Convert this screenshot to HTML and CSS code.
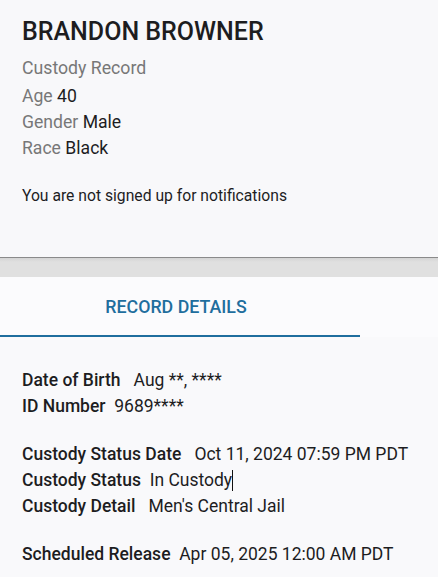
FILE: index.html
```html
<!DOCTYPE html>
<html>
<head>
<meta charset="utf-8">
<link rel="stylesheet" href="styles.css">
</head>
<body>
<div class="header">
  <h1 class="name">BRANDON BROWNER</h1>
  <div class="sub">Custody Record</div>
  <div class="meta first"><span class="lbl">Age</span> <span class="val">40</span></div>
  <div class="meta"><span class="lbl">Gender</span> <span class="val">Male</span></div>
  <div class="meta"><span class="lbl">Race</span> <span class="val">Black</span></div>
  <div class="notice">You are not signed up for notifications</div>
</div>
<div class="band"></div>
<div class="tabs">
  <div class="tab active">RECORD DETAILS</div>
</div>
<div class="details">
  <div class="group">
    <div class="row"><span class="k">Date of Birth</span>   <span class="v">Aug **, ****</span></div>
    <div class="row"><span class="k">ID Number</span>  <span class="v">9689****</span></div>
  </div>
  <div class="group">
    <div class="row"><span class="k">Custody Status Date</span>   <span class="v">Oct 11, 2024 07:59 PM PDT</span></div>
    <div class="row"><span class="k">Custody Status</span>  <span class="v">In Custody<span class="caret"></span></span></div>
    <div class="row"><span class="k">Custody Detail</span>   <span class="v">Men's Central Jail</span></div>
  </div>
  <div class="group">
    <div class="row"><span class="k">Scheduled Release</span>  <span class="v">Apr 05, 2025 12:00 AM PDT</span></div>
  </div>
</div>
</body>
</html>
```
FILE: styles.css
```css
html, body {
  margin: 0;
  padding: 0;
}
body {
  font-family: Roboto, "Liberation Sans", sans-serif;
  background: #f9f9fb;
  color: #1d1d1f;
  width: 438px;
  height: 577px;
  overflow: hidden;
}
.header {
  background: #f8f8fa;
  padding: 16px 22px 0;
  height: 241px;
  border-bottom: 1px solid #8a8a8a;
}
.name {
  margin: 0;
  font-size: 25px;
  font-weight: 500;
  line-height: 32px;
  color: #1d1d1f;
}
.sub {
  margin-top: 8px;
  font-size: 17.7px;
  line-height: 25px;
  color: #777;
}
.meta {
  font-size: 17.6px;
  line-height: 26px;
}
.meta.first {
  margin-top: 2px;
}
.lbl {
  color: #777;
}
.val {
  color: #1d1d1f;
}
.notice {
  margin-top: 25px;
  font-size: 15.7px;
  line-height: 20px;
}
.band {
  height: 19px;
  background: linear-gradient(#d4d4d4, #e0e0e0 4px);
}
.tabs {
  background: #fbfbfd;
  height: 60px;
  display: flex;
}
.tab {
  width: 360px;
  box-sizing: border-box;
  display: flex;
  align-items: center;
  justify-content: center;
  font-size: 17.8px;
  font-weight: 500;
  color: #1f6e9e;
  border-bottom: 2px solid #1f6e9e;
  padding: 1px 8px 0 0;
}
.details {
  padding: 30px 22px 0;
}
.group {
  margin-bottom: 22px;
}
.row {
  font-size: 17.5px;
  line-height: 26px;
  white-space: pre;
}
.k {
  font-weight: 500;
}
.caret {
  display: inline-block;
  width: 1px;
  height: 21px;
  background: #111;
  vertical-align: -5px;
}
```
